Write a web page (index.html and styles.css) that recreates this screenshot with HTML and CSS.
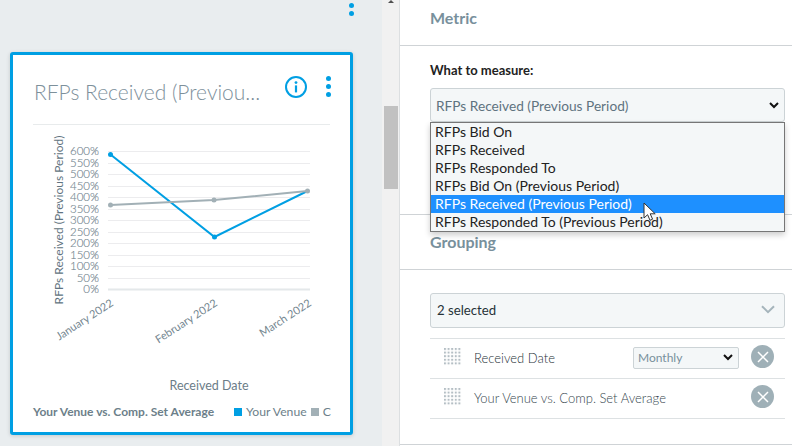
FILE: index.html
```html
<!DOCTYPE html>
<html lang="en">
<head>
<meta charset="utf-8">
<title>RFPs Received</title>
<link rel="stylesheet" href="styles.css">
</head>
<body>
<div class="app">
  <main class="canvas">
    <div class="top-kebab"><span></span><span></span></div>
    <section class="card">
      <header class="card-head">
        <h2 class="card-title">RFPs Received (Previou...</h2>
        <svg class="info" width="24" height="24" viewBox="0 0 24 24"><circle cx="12" cy="12" r="10" fill="none" stroke="#009fe3" stroke-width="2"/><circle cx="12" cy="7.6" r="1.4" fill="#009fe3"/><rect x="10.9" y="10.4" width="2.2" height="7" fill="#009fe3"/></svg>
        <div class="kebab"><span></span><span></span><span></span></div>
      </header>
      <svg class="chart" width="337" height="270" viewBox="13 125 337 270">
        <g class="grid">
          <line x1="108" x2="310" y1="151.5" y2="151.5"/><line x1="108" x2="310" y1="163.5" y2="163.5"/>
          <line x1="108" x2="310" y1="174.5" y2="174.5"/><line x1="108" x2="310" y1="186.5" y2="186.5"/>
          <line x1="108" x2="310" y1="197.5" y2="197.5"/><line x1="108" x2="310" y1="209.5" y2="209.5"/>
          <line x1="108" x2="310" y1="220.5" y2="220.5"/><line x1="108" x2="310" y1="232.5" y2="232.5"/>
          <line x1="108" x2="310" y1="243.5" y2="243.5"/><line x1="108" x2="310" y1="255.5" y2="255.5"/>
          <line x1="108" x2="310" y1="266.5" y2="266.5"/><line x1="108" x2="310" y1="278.5" y2="278.5"/>
          <line class="base" x1="108" x2="310" y1="289.5" y2="289.5"/>
        </g>
        <g class="ylabels">
          <text x="99" y="155">600%</text><text x="99" y="167">550%</text><text x="99" y="178">500%</text>
          <text x="99" y="190">450%</text><text x="99" y="201">400%</text><text x="99" y="213">350%</text>
          <text x="99" y="224">300%</text><text x="99" y="236">250%</text><text x="99" y="247">200%</text>
          <text x="99" y="259">150%</text><text x="99" y="270">100%</text><text x="99" y="282">50%</text>
          <text x="99" y="293">0%</text>
        </g>
        <text class="ytitle" transform="translate(63 220) rotate(-90)">RFPs Received (Previous Period)</text>
        <polyline class="s-blue" points="110.5,154.5 214.5,237 307.5,191"/>
        <circle class="d-blue" cx="110.5" cy="154.5" r="2.5"/><circle class="d-blue" cx="214.5" cy="237" r="2.5"/>
        <polyline class="s-gray" points="110.5,205 214,200 307.5,191"/>
        <circle class="d-gray" cx="110.5" cy="205" r="2.5"/><circle class="d-gray" cx="214" cy="200" r="2.5"/><circle class="d-gray" cx="307.5" cy="191" r="2.5"/>
        <g class="xlabels">
          <text transform="translate(114 305) rotate(-33)">January 2022</text>
          <text transform="translate(218 305) rotate(-33)">February 2022</text>
          <text transform="translate(312 305) rotate(-33)">March 2022</text>
        </g>
        <text class="xtitle" x="209" y="390">Received Date</text>
      </svg>
      <footer class="legend">
        <strong class="legend-title">Your Venue vs. Comp. Set Average</strong>
        <span class="swatch swatch-blue"></span><span class="legend-item">Your Venue</span>
        <span class="swatch swatch-gray"></span><span class="legend-item">C</span>
      </footer>
    </section>
  </main>
  <div class="scrollbar"><i class="arrow"></i><div class="thumb"></div></div>
  <aside class="panel">
    <h3 class="section-head head-metric">Metric</h3>
    <div class="section metric">
      <label class="label">What to measure:</label>
      <div class="select-wrap">
        <select class="select"><option>RFPs Received (Previous Period)</option></select>
        <ul class="listbox">
          <li>RFPs Bid On</li>
          <li>RFPs Received</li>
          <li>RFPs Responded To</li>
          <li>RFPs Bid On (Previous Period)</li>
          <li class="active">RFPs Received (Previous Period)</li>
          <li>RFPs Responded To (Previous Period)</li>
        </ul>
        <svg class="cursor" width="14" height="20" viewBox="0 0 14 20"><path d="M1 1v15l3.6-3.3 2.4 5.6 2.6-1.1-2.4-5.4h5z" fill="#fff" stroke="#333" stroke-width="1"/></svg>
      </div>
    </div>
    <h3 class="section-head head-group">Grouping</h3>
    <div class="section grouping">
      <div class="multi"><span>2 selected</span>
        <svg width="14" height="9" viewBox="0 0 14 9"><path d="M1 1.2 7 7.2l6-6" fill="none" stroke="#a5b4bb" stroke-width="2"/></svg>
      </div>
      <div class="rows">
        <div class="row">
          <svg class="grip" width="18" height="18" viewBox="0 0 18 18"><rect width="18" height="18" fill="url(#dots)"/><defs><pattern id="dots" width="3.6" height="3.6" patternUnits="userSpaceOnUse"><rect width="2" height="2" fill="#b4bec4"/></pattern></defs></svg>
          <span class="row-name row-name-date">Received Date</span>
          <select class="mini"><option>Monthly</option></select>
          <button class="remove" type="button"><svg width="12" height="12" viewBox="0 0 12 12"><path d="M1 1l10 10M11 1 1 11" stroke="#fff" stroke-width="1.5"/></svg></button>
        </div>
        <div class="row">
          <svg class="grip" width="18" height="18" viewBox="0 0 18 18"><rect width="18" height="18" fill="url(#dots)"/></svg>
          <span class="row-name">Your Venue vs. Comp. Set Average</span>
          <button class="remove" type="button"><svg width="12" height="12" viewBox="0 0 12 12"><path d="M1 1l10 10M11 1 1 11" stroke="#fff" stroke-width="1.5"/></svg></button>
        </div>
      </div>
    </div>
  </aside>
</div>
</body>
</html>
```
FILE: styles.css
```css
* { box-sizing: border-box; }
html, body { margin: 0; height: 100%; overflow: hidden; }
body { font-family: Lato, "Liberation Sans", sans-serif; background: #fff; }
.app { display: flex; width: 792px; height: 446px; }

.canvas { width: 382px; background: #e9edef; padding: 2px 0 0 10px; flex: none; }
.top-kebab { display: flex; flex-direction: column; gap: 3px; height: 50px; padding-left: 339px; }
.top-kebab span, .kebab span { display: block; border-radius: 50%; background: #009fe3; }
.top-kebab span { width: 5px; height: 5px; }
.top-kebab span:first-child { margin-top: 1px; }

.card { width: 343px; height: 383px; background: #fff; border: 3px solid #009fe3; border-radius: 3px; box-shadow: 0 1px 4px rgba(0,0,0,.15); }
.card-head { display: flex; align-items: center; height: 70px; margin: 0 20px; padding-left: 1px; border-bottom: 1px solid #e8ebec; }
.card-title { margin: 4px 0 0; font-size: 21px; font-weight: 300; color: #7d909b; width: 250px; flex: none; white-space: nowrap; }
.info { flex: none; margin-top: -6px; }
.kebab { display: flex; flex-direction: column; gap: 3px; margin-left: 18px; margin-top: -6px; }
.kebab span { width: 5px; height: 5px; }

.chart { display: block; }
.grid line { stroke: #ececee; stroke-width: 1; }
.grid .base { stroke: #e4e8ea; stroke-width: 2; }
.ylabels text { font-size: 11.5px; fill: #74868f; text-anchor: end; font-weight: 300; stroke: #74868f; stroke-width: .15; }
.ytitle { font-size: 12px; fill: #5f7380; text-anchor: middle; }
.xlabels text { font-size: 11px; fill: #74868f; text-anchor: end; }
.xtitle { font-size: 12.5px; fill: #6b7d88; text-anchor: middle; }
.s-blue { fill: none; stroke: #009fe3; stroke-width: 2; }
.s-gray { fill: none; stroke: #a2b0b6; stroke-width: 2; }
.d-blue { fill: #009fe3; }
.d-gray { fill: #a2b0b6; }

.legend { display: flex; align-items: center; margin: 9px 0 0 20px; font-size: 12.2px; color: #6d7f8a; white-space: nowrap; }
.legend-title { font-weight: 700; width: 201px; font-size: 12px; flex: none; }
.swatch { width: 8px; height: 8px; flex: none; margin-right: 4px; }
.swatch-blue { background: #009fe3; }
.swatch-gray { background: #a2b0b6; margin-left: 4px; }

.scrollbar { width: 17px; flex: none; background: #f1f1f1; padding: 0 1px 0 2px; }
.arrow { display: block; width: 0; height: 0; margin: 0 auto; border: 3px solid transparent; border-top: 0; border-bottom: 3px solid #505050; }
.thumb { height: 83px; margin-top: 103px; background: #c1c1c1; }

.panel { flex: 1; border-left: 1px solid #dcdfe1; min-width: 0; }
.section-head { margin: 0; padding: 0 0 0 30px; font-size: 16px; font-weight: 700; color: #78909c; display: flex; align-items: center; border-bottom: 1px solid #cfd3d6; }
.head-metric { height: 46px; padding-bottom: 11px; }
.metric { height: 169px; padding: 16px 7px 0 30px; border-bottom: 1px solid #cfd3d6; }
.label { display: block; font-size: 13px; font-weight: 700; color: #222; line-height: 16px; }
.select-wrap { position: relative; margin-top: 10px; }
.select, .mini { appearance: none; -webkit-appearance: none; background-color: #f4f7f8; background-repeat: no-repeat; background-image: url("data:image/svg+xml,%3Csvg xmlns='http://www.w3.org/2000/svg' width='10' height='7' viewBox='0 0 10 7'%3E%3Cpath d='M1 1l4 4 4-4' fill='none' stroke='%23111' stroke-width='2'/%3E%3C/svg%3E"); border: 1px solid #ccd3d6; }
.select { display: block; width: 100%; height: 34px; padding: 0 0 0 5px; background-position: right 5px center; border-radius: 3px; font: 13.7px Lato, "Liberation Sans", sans-serif; color: #5f7380; }
.listbox { position: absolute; left: 0; right: 0; top: 34px; margin: 0; padding: 0; list-style: none; background: #f4f7f8; border: 1px solid #767676; box-shadow: 0 3px 6px rgba(0,0,0,.2); font-size: 14px; color: #222; z-index: 2; }
.listbox li { height: 18px; line-height: 18px; padding-left: 4px; white-space: nowrap; }
.listbox .active { background: #1e90ff; color: #fff; }
.cursor { position: absolute; left: 213px; top: 114px; z-index: 3; }

.head-group { height: 55px; padding-bottom: 2px; }
.grouping { height: 175px; padding: 23px 7px 0 30px; border-bottom: 1px solid #cfd3d6; }
.multi { display: flex; justify-content: space-between; align-items: center; height: 35px; padding: 0 9px 2px 6px; background: #f4f7f8; border: 1px solid #ccd3d6; border-radius: 3px; font-size: 13.2px; color: #263238; }
.rows { margin-top: 10px; border-top: 1px solid #dde1e3; }
.row { display: flex; align-items: center; height: 40px; padding-left: 14px; border-bottom: 1px solid #dde1e3; }
.grip { flex: none; margin-top: -4px; }
.row-name { flex: 1; margin: -2px 0 0 12px; font-size: 13px; font-weight: 300; color: #37474f; white-space: nowrap; }
.row-name-date { color: #263238; }
.mini { width: 106px; height: 22px; margin: -2px 12px 0 0; padding-left: 4px; background-position: right 5px center; border-radius: 2px; font: 12px Lato, "Liberation Sans", sans-serif; color: #78909c; }
.remove { width: 23px; height: 23px; margin: -4px 11px 0 0; padding: 0; flex: none; display: flex; align-items: center; justify-content: center; border: 0; border-radius: 50%; background: #9fb0b7; }
```
